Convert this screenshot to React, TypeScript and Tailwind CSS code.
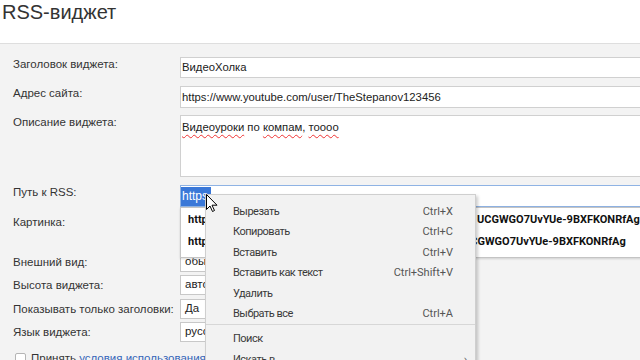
import React from "react";

const Label = ({ children, center }: { children: React.ReactNode; center?: boolean }) => (
  <div className={`w-[167px] shrink-0 whitespace-nowrap text-[11.5px] leading-[15px] text-[#333] ${center ? "self-center" : ""}`}>{children}</div>
);

const Input = ({ children, h = "h-[22px]" }: { children?: React.ReactNode; h?: string }) => (
  <div className={`w-[520px] shrink-0 ${h} bg-white border border-[#d0d0d0] flex items-center pl-[1px] text-[11.3px] text-[#222] whitespace-nowrap`}>{children}</div>
);

const Select = ({ children }: { children: React.ReactNode }) => (
  <div className="w-[110px] h-[20px] bg-white border border-[#c8c8c8] flex items-center pl-[4px] text-[11.5px] text-[#222]">{children}</div>
);

const Wavy = ({ children }: { children: React.ReactNode }) => (
  <span className="underline decoration-wavy decoration-[#e33] decoration-[1px] underline-offset-[3px]">{children}</span>
);

const MenuItem = ({ label, shortcut, arrow }: { label: string; shortcut?: string; arrow?: boolean }) => (
  <div className="h-[20.4px] flex items-center justify-between pl-[27px] pr-[22px] relative whitespace-nowrap">
    <span className="tracking-[-0.5px]">{label}</span>
    {shortcut && <span className="text-[#555]">{shortcut}</span>}
    {arrow && <span className="absolute right-[8px] text-[#555]">›</span>}
  </div>
);

export default function App() {
  return (
    <div className="w-[640px] h-[360px] overflow-hidden relative bg-white font-['Liberation_Sans',Arial,sans-serif] text-[#333]">
      <div className="h-[43px] pl-[2px] pt-[1px] text-[20px] leading-[22px] text-[#333]">RSS-виджет</div>
      <div className="border-t border-[#dedede] bg-[#f3f3f3] h-[320px] pt-[13px] pl-[13px]">
        <div className="flex items-start mb-[8px]">
          <Label>Заголовок виджета:</Label>
          <Input h="h-[21px]">ВидеоХолка</Input>
        </div>
        <div className="flex items-start mb-[7px]">
          <Label>Адрес сайта:</Label>
          <Input>https://www.youtube.com/user/TheStepanov123456</Input>
        </div>
        <div className="flex items-start mb-[8px]">
          <Label>Описание виджета:</Label>
          <div className="w-[520px] shrink-0 h-[62px] bg-white border border-[#d0d0d0] pl-[1px] pt-[3px] text-[11.3px] leading-[16px] text-[#222]">
            <Wavy>Видеоуроки</Wavy> по <Wavy>компам</Wavy>, <Wavy>тоооо</Wavy>
          </div>
        </div>
        <div className="flex items-start mb-[8px]">
          <Label>Путь к RSS:</Label>
          <div className="w-[520px] shrink-0 h-[22px] bg-white border border-[#8fb3e4] flex items-center text-[12px]">
            <span className="bg-[#3a78d8] text-white leading-[19px] pl-[1px] pr-[3px]">https</span>
          </div>
        </div>
        <div className="flex items-start mb-[15px]">
          <Label>Картинка:</Label>
          <Input />
        </div>
        <div className="flex items-center mb-[3px] h-[20px]">
          <Label center>Внешний вид:</Label>
          <Select>обычный</Select>
        </div>
        <div className="flex items-center mb-[4px] h-[20px]">
          <Label center>Высота виджета:</Label>
          <Select>авто</Select>
        </div>
        <div className="flex items-center mb-[3px] h-[20px]">
          <Label center>Показывать только заголовки:</Label>
          <Select>Да</Select>
        </div>
        <div className="flex items-center mb-[8px] h-[20px]">
          <Label center>Язык виджета:</Label>
          <Select>русский</Select>
        </div>
        <div className="flex items-center gap-[5px] pl-[2px] text-[11.5px] whitespace-nowrap">
          <div className="w-[11px] h-[11px] bg-white border border-[#b5b5b5] rounded-[2px]" />
          <span className="text-[#333]">
            Принять <span className="text-[#3565b8]">условия использования</span>
          </span>
        </div>
      </div>

      {/* autocomplete dropdown */}
      <div className="absolute left-[180px] top-[207px] w-[480px] h-[51px] bg-white border border-[#c4c4c4] shadow-[0_1px_2px_rgba(0,0,0,0.15)] pt-[1px] font-['Roboto',sans-serif] font-bold text-[11px] text-[#111]">
        <div className="h-[22px] flex items-center pl-[7px] whitespace-nowrap">
          <span className="w-[289px] overflow-hidden shrink-0">https://www.youtube.com/feeds/videos.xml?channel_id=</span>
          <span>UCGWGO7UvYUe-9BXFKONRfAg</span>
        </div>
        <div className="h-[22px] flex items-center pl-[7px] whitespace-nowrap">
          <span className="w-[275px] overflow-hidden shrink-0">https://www.youtube.com/channel/</span>
          <span>UCGWGO7UvYUe-9BXFKONRfAg</span>
        </div>
      </div>

      {/* context menu */}
      <div className="absolute left-[205px] top-[194px] w-[271px] h-[200px] bg-[#f2f2f2] border border-[#cfcfcf] shadow-[2px_2px_3px_rgba(0,0,0,0.2)] pt-[7px] font-['Roboto',sans-serif] text-[11px] text-[#3a3a3a]">
        <MenuItem label="Вырезать" shortcut="Ctrl+X" />
        <MenuItem label="Копировать" shortcut="Ctrl+C" />
        <MenuItem label="Вставить" shortcut="Ctrl+V" />
        <MenuItem label="Вставить как текст" shortcut="Ctrl+Shift+V" />
        <MenuItem label="Удалить" />
        <MenuItem label="Выбрать все" shortcut="Ctrl+A" />
        <div className="h-[5px] flex items-start">
          <div className="w-full h-px bg-[#d7d7d7]" />
        </div>
        <MenuItem label="Поиск" />
        <MenuItem label="Искать в" arrow />
      </div>

      {/* mouse cursor */}
      <svg className="absolute left-[206px] top-[194px]" width="12" height="19" viewBox="0 0 12 19">
        <path d="M0.5 0.5 L0.5 15.5 L4 12 L6.5 17.5 L8.5 16.5 L6 11.2 L11 11.2 Z" fill="white" stroke="black" strokeWidth="1" strokeLinejoin="round" />
      </svg>
    </div>
  );
}
